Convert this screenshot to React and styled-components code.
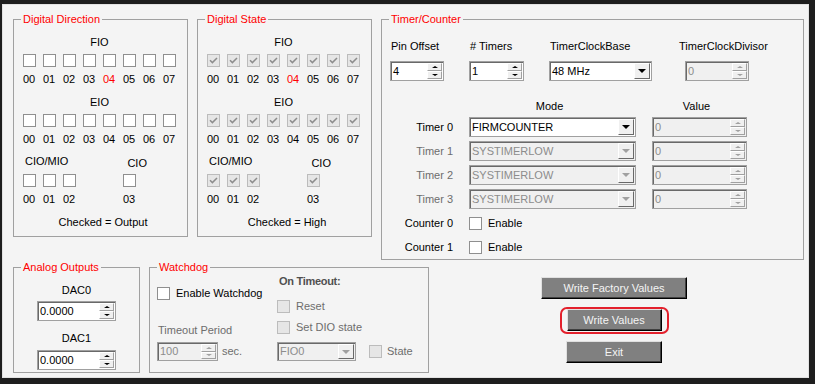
import React from "react";
import styled, { createGlobalStyle } from "styled-components";

const GlobalStyle = createGlobalStyle`
    html, body {
        margin: 0;
        padding: 0;
    }

    body {
        background-color: #1e1e1e;
        font-family: "Liberation Sans", Arial, sans-serif;
        font-size: 11px;
        line-height: 13px;
        color: #000000;
    }
`;

const PINS = ["00", "01", "02", "03", "04", "05", "06", "07"];

export default function App() {
    return (
        <>
            <GlobalStyle />
            <Window>
                <TopRow>
                    <DigitalGroup title="Digital Direction" footer="Checked = Output" />
                    <DigitalGroup title="Digital State" footer="Checked = High" checked disabled />
                    <TimerCounter />
                </TopRow>
                <BottomRow>
                    <Group $w={127} $h={112}>
                        <Legend>Analog Outputs</Legend>
                        <AnalogBody>
                            <Caption>DAC0</Caption>
                            <Spin value="0.0000" width={79} mt={4} />
                            <Caption $mt={11}>DAC1</Caption>
                            <Spin value="0.0000" width={79} mt={5} />
                        </AnalogBody>
                    </Group>
                    <Watchdog />
                    <ButtonColumn>
                        <Button $w={146}>Write Factory Values</Button>
                        <Highlight>
                            <Button $w={95}>Write Values</Button>
                        </Highlight>
                        <Button $w={96}>Exit</Button>
                    </ButtonColumn>
                </BottomRow>
            </Window>
        </>
    );
}

function DigitalGroup({ title, footer, checked, disabled }) {
    return (
        <Group $w={175} $h={224}>
            <Legend>{title}</Legend>
            <DigitalBody>
                <PinBank title="FIO" red="04" checked={checked} disabled={disabled} />
                <PinBank title="EIO" checked={checked} disabled={disabled} $mt={10} />
                <Bank $mt={9}>
                    <CioTitles>
                        <span>CIO/MIO</span>
                        <CioLabel>CIO</CioLabel>
                    </CioTitles>
                    <PinGrid>
                        {[1, 2, 3, 6].map((col) => (
                            <GridCell key={col} $col={col}>
                                <Check checked={checked} disabled={disabled} />
                            </GridCell>
                        ))}
                    </PinGrid>
                    <PinGrid $labels>
                        {[[1, "00"], [2, "01"], [3, "02"], [6, "03"]].map(([col, label]) => (
                            <PinNum key={col} $col={col}>{label}</PinNum>
                        ))}
                    </PinGrid>
                </Bank>
                <Footer>{footer}</Footer>
            </DigitalBody>
        </Group>
    );
}

function PinBank({ title, red, checked, disabled, $mt }) {
    return (
        <Bank $mt={$mt}>
            <BankTitle>{title}</BankTitle>
            <PinGrid>
                {PINS.map((pin) => (
                    <Check key={pin} checked={checked} disabled={disabled} />
                ))}
            </PinGrid>
            <PinGrid $labels>
                {PINS.map((pin) => (
                    <PinNum key={pin} $red={pin === red}>{pin}</PinNum>
                ))}
            </PinGrid>
        </Bank>
    );
}

function TimerCounter() {
    const timers = [
        { name: "Timer 0", mode: "FIRMCOUNTER", enabled: true },
        { name: "Timer 1", mode: "SYSTIMERLOW" },
        { name: "Timer 2", mode: "SYSTIMERLOW" },
        { name: "Timer 3", mode: "SYSTIMERLOW" }
    ];

    return (
        <Group $w={423} $h={247}>
            <Legend>Timer/Counter</Legend>
            <ClockGrid>
                <ClockCol>
                    <FieldLabel>Pin Offset</FieldLabel>
                    <Spin value="4" width={54} />
                </ClockCol>
                <ClockCol>
                    <FieldLabel># Timers</FieldLabel>
                    <Spin value="1" width={55} />
                </ClockCol>
                <ClockCol>
                    <FieldLabel>TimerClockBase</FieldLabel>
                    <Select value="48 MHz" width={103} />
                </ClockCol>
                <ClockCol $shift={6}>
                    <FieldLabel $flush>TimerClockDivisor</FieldLabel>
                    <Spin value="0" width={64} disabled />
                </ClockCol>
            </ClockGrid>
            <TimerGrid>
                <span />
                <ColHead>Mode</ColHead>
                <ColHead>Value</ColHead>
                {timers.map((t) => (
                    <React.Fragment key={t.name}>
                        <RowLabel $dim={!t.enabled}>{t.name}</RowLabel>
                        <Select value={t.mode} width={167} disabled={!t.enabled} />
                        <Spin value="0" width={95} disabled />
                    </React.Fragment>
                ))}
                {["Counter 0", "Counter 1"].map((c) => (
                    <React.Fragment key={c}>
                        <RowLabel>{c}</RowLabel>
                        <CheckRow>
                            <Check />
                            <span>Enable</span>
                        </CheckRow>
                        <span />
                    </React.Fragment>
                ))}
            </TimerGrid>
        </Group>
    );
}

function Watchdog() {
    return (
        <Group $w={280} $h={112}>
            <Legend>Watchdog</Legend>
            <WatchBody>
                <WatchCol $w={120}>
                    <CheckRow $mt={13}>
                        <Check />
                        <span>Enable Watchdog</span>
                    </CheckRow>
                    <Caption $mt={24} $dim $left>Timeout Period</Caption>
                    <CheckRow $mt={5} $gap={4} $dim>
                        <Spin value="100" width={61} height={19} disabled />
                        <span>sec.</span>
                    </CheckRow>
                </WatchCol>
                <WatchCol>
                    <OnTimeout>On Timeout:</OnTimeout>
                    <CheckRow $mt={12} $dim>
                        <Check disabled />
                        <span>Reset</span>
                    </CheckRow>
                    <CheckRow $mt={8} $dim>
                        <Check disabled />
                        <span>Set DIO state</span>
                    </CheckRow>
                    <CheckRow $mt={8} $dim>
                        <Select value="FIO0" width={79} height={19} disabled />
                        <StateCheck>
                            <Check disabled />
                            <span>State</span>
                        </StateCheck>
                    </CheckRow>
                </WatchCol>
            </WatchBody>
        </Group>
    );
}

function Check({ checked, disabled }) {
    return (
        <Box $disabled={disabled}>
            {checked && (
                <svg width="9" height="9" viewBox="0 0 9 9">
                    <path d="M1 4.2 L3.4 6.6 L8 2" fill="none" stroke={disabled ? "#8d8d8d" : "#222"} strokeWidth="1.5" />
                </svg>
            )}
        </Box>
    );
}

function Spin({ value, width, height = 20, disabled, mt = 0 }) {
    return (
        <Field $w={width} $h={height} $disabled={disabled} $mt={mt}>
            <FieldText $disabled={disabled}>{value}</FieldText>
            <SpinButtons>
                <SpinHalf>
                    <Arrow $up $small $disabled={disabled} />
                </SpinHalf>
                <SpinHalf>
                    <Arrow $small $disabled={disabled} />
                </SpinHalf>
            </SpinButtons>
        </Field>
    );
}

function Select({ value, width, height = 20, disabled }) {
    return (
        <Field $w={width} $h={height} $disabled={disabled}>
            <FieldText $disabled={disabled}>{value}</FieldText>
            <DropButton>
                <Arrow $disabled={disabled} />
            </DropButton>
        </Field>
    );
}

const Window = styled.div`
    box-sizing: border-box;
    width: 807px;
    height: 374px;
    margin: 4px 0 0 2px;
    padding: 8px 0 0 10px;
    background-color: #F4F4F4;
    border: 1px solid #E2E2E2;
    display: flex;
    flex-direction: column;
    gap: 1px;
`;

const TopRow = styled.div`
    display: flex;
    align-items: flex-start;
    gap: 9px;
`;

const BottomRow = styled.div`
    display: flex;
    align-items: flex-start;
    gap: 9px;
`;

const Group = styled.fieldset`
    box-sizing: border-box;
    width: ${(p) => p.$w}px;
    height: ${(p) => p.$h}px;
    min-width: 0;
    margin: 0;
    padding: 0;
    border: 1px solid #A0A0A0;
    flex-shrink: 0;
`;

const Legend = styled.legend`
    margin-left: 7px;
    padding: 0 2px;
    color: #FF0000;
    line-height: 13px;
`;

const DigitalBody = styled.div`
    display: flex;
    flex-direction: column;
    padding: 10px 4px 0 9px;
`;

const Bank = styled.div`
    display: flex;
    flex-direction: column;
    margin-top: ${(p) => p.$mt || 0}px;
`;

const BankTitle = styled.div`
    width: 153px;
    height: 13px;
    text-align: center;
    margin-bottom: 5px;
`;

const CioTitles = styled.div`
    display: flex;
    height: 14px;
    margin-bottom: 5px;
    padding-left: 2px;
`;

const CioLabel = styled.span`
    margin-left: 59px;
    padding-top: 2px;
`;

const PinGrid = styled.div`
    display: grid;
    grid-template-columns: repeat(8, 13px);
    column-gap: 7px;
    height: 13px;
    margin-top: ${(p) => (p.$labels ? 6 : 0)}px;
`;

const GridCell = styled.div`
    grid-column: ${(p) => p.$col};
    grid-row: 1;
`;

const PinNum = styled.span`
    white-space: nowrap;
    grid-column: ${(p) => p.$col || "auto"};
    color: ${(p) => (p.$red ? "#FF0000" : "#000000")};
`;

const Footer = styled.div`
    margin-top: 10px;
    text-align: center;
`;

const Box = styled.span`
    box-sizing: border-box;
    width: 13px;
    height: 13px;
    flex-shrink: 0;
    display: flex;
    align-items: center;
    justify-content: center;
    border: 1px solid ${(p) => (p.$disabled ? "#BCBCBC" : "#8F8F8F")};
    background-color: ${(p) => (p.$disabled ? "#E6E6E6" : "#FFFFFF")};
`;

const CheckRow = styled.div`
    display: flex;
    align-items: center;
    gap: ${(p) => p.$gap || 6}px;
    margin-top: ${(p) => p.$mt || 0}px;
    color: ${(p) => (p.$dim ? "#6D6D6D" : "#000000")};
    white-space: nowrap;
`;

const StateCheck = styled.div`
    display: flex;
    align-items: center;
    gap: 5px;
    margin-left: 7px;
`;

const Field = styled.div`
    box-sizing: border-box;
    width: ${(p) => p.$w}px;
    height: ${(p) => p.$h}px;
    margin-top: ${(p) => p.$mt || 0}px;
    display: flex;
    align-items: stretch;
    padding: 1px;
    border: 1px solid #A0A0A0;
    box-shadow: inset 1px 1px 0 #696969;
    background-color: ${(p) => (p.$disabled ? "#F0F0F0" : "#FFFFFF")};
    flex-shrink: 0;
`;

const FieldText = styled.span`
    flex: 1;
    display: flex;
    align-items: center;
    padding-left: 1px;
    overflow: hidden;
    white-space: nowrap;
    color: ${(p) => (p.$disabled ? "#8C8C8C" : "#000000")};
`;

const SpinButtons = styled.div`
    width: 15px;
    display: flex;
    flex-direction: column;
`;

const SpinHalf = styled.div`
    box-sizing: border-box;
    flex: 1;
    display: flex;
    align-items: center;
    justify-content: center;
    background-color: #F0F0F0;
    border: 1px solid;
    border-color: #FFFFFF #A0A0A0 #A0A0A0 #FFFFFF;
`;

const DropButton = styled.div`
    box-sizing: border-box;
    width: 16px;
    display: flex;
    align-items: center;
    justify-content: center;
    background-color: #F0F0F0;
    border: 1px solid;
    border-color: #FFFFFF #696969 #696969 #FFFFFF;
`;

const Arrow = styled.span`
    width: 0;
    height: 0;
    border-left: ${(p) => (p.$small ? 3 : 4)}px solid transparent;
    border-right: ${(p) => (p.$small ? 3 : 4)}px solid transparent;
    ${(p) => (p.$up ? "border-bottom" : "border-top")}: ${(p) => (p.$small ? 2 : 4)}px solid ${(p) => (p.$disabled ? "#A0A0A0" : "#000000")};
`;

const ClockGrid = styled.div`
    display: grid;
    grid-template-columns: 79px 80px 130px auto;
    margin: 14px 0 0 8px;
`;

const ClockCol = styled.div`
    display: flex;
    flex-direction: column;
    gap: 8px;
    padding-left: ${(p) => p.$shift || 0}px;

    & > span {
        margin-left: ${(p) => (p.$shift ? -p.$shift : 0)}px;
    }
`;

const FieldLabel = styled.span`
    height: 13px;
    padding-left: ${(p) => (p.$flush ? 0 : 1)}px;
    white-space: nowrap;
`;

const TimerGrid = styled.div`
    display: grid;
    grid-template-columns: 71px 167px 95px;
    grid-template-rows: 13px repeat(6, 20px);
    column-gap: 16px;
    row-gap: 4px;
    margin-top: 19px;
`;

const ColHead = styled.span`
    text-align: center;
    padding-right: 6px;
`;

const RowLabel = styled.span`
    align-self: center;
    text-align: right;
    white-space: nowrap;
    color: ${(p) => (p.$dim ? "#6D6D6D" : "#000000")};
`;

const AnalogBody = styled.div`
    display: flex;
    flex-direction: column;
    align-items: center;
    padding-top: 10px;
`;

const Caption = styled.span`
    height: 13px;
    margin-top: ${(p) => p.$mt || 0}px;
    color: ${(p) => (p.$dim ? "#6D6D6D" : "#000000")};
    align-self: ${(p) => (p.$left ? "flex-start" : "center")};
    padding-left: ${(p) => (p.$left ? 1 : 0)}px;
`;

const WatchBody = styled.div`
    display: flex;
    padding-left: 7px;
`;

const WatchCol = styled.div`
    display: flex;
    flex-direction: column;
    width: ${(p) => (p.$w ? `${p.$w}px` : "auto")};
`;

const OnTimeout = styled.span`
    margin-top: 1px;
    padding-left: 2px;
    font-weight: bold;
    color: #505050;
    letter-spacing: -0.3px;
`;

const ButtonColumn = styled.div`
    display: flex;
    flex-direction: column;
    align-items: center;
    width: 146px;
    margin-left: 103px;
    padding-top: 16px;
    gap: 8px;

    & > :last-child {
        margin-top: -1px;
    }
`;

const Button = styled.button`
    box-sizing: border-box;
    width: ${(p) => p.$w}px;
    height: 22px;
    padding: 0;
    font: inherit;
    color: #F4F4F4;
    background-color: #808080;
    border: 1px solid;
    border-color: #E0E0E0 #000000 #000000 #E0E0E0;
    box-shadow: inset -1px -1px 0 #404040;
`;

const Highlight = styled.div`
    display: flex;
    padding: 0 5px 1px 5px;
    border: 2px solid #E3202C;
    border-radius: 7px;
`;
